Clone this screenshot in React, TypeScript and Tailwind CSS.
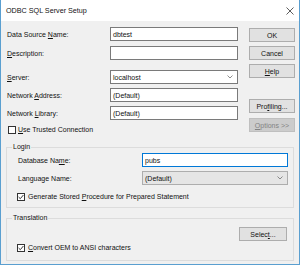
import React from 'react';

const U: React.FC<{ children: React.ReactNode }> = ({ children }) => <span className="underline underline-offset-[1px]">{children}</span>;

const Chevron: React.FC = () => (
  <svg width="6" height="4" viewBox="0 0 6 4" className="shrink-0">
    <path d="M0.5 0.5 L3 3 L5.5 0.5" fill="none" stroke="#707070" strokeWidth="0.8" />
  </svg>
);

const TextBox: React.FC<{ value?: string; focused?: boolean; className?: string }> = ({ value, focused, className }) => (
  <div
    className={`h-[14px] bg-white border flex items-center px-[2px] ${focused ? 'border-[#0078d7]' : 'border-[#7a7a7a]'} ${className ?? 'w-[128px]'}`}
  >
    {value}
  </div>
);

const Combo: React.FC<{ value: string; list?: boolean; className?: string }> = ({ value, list, className }) => (
  <div
    className={`h-[14px] border flex items-center justify-between pl-[2px] pr-[4px] ${
      list ? 'bg-[#e5e5e5] border-[#adadad]' : 'bg-white border-[#7a7a7a]'
    } ${className ?? 'w-[128px]'}`}
  >
    <span>{value}</span>
    <Chevron />
  </div>
);

const Button: React.FC<{ children: React.ReactNode; disabled?: boolean; className?: string }> = ({ children, disabled, className }) => (
  <div
    className={`h-[14px] flex items-center justify-center border ${
      disabled ? 'bg-[#cccccc] border-[#bfbfbf] text-[#838383]' : 'bg-[#e1e1e1] border-[#adadad]'
    } ${className ?? 'w-[46px]'}`}
  >
    {children}
  </div>
);

const Check: React.FC<{ checked?: boolean }> = ({ checked }) => (
  <div className="w-[8px] h-[8px] bg-white border border-[#333333] shrink-0 flex items-center justify-center">
    {checked && (
      <svg width="6" height="6" viewBox="0 0 6 6">
        <path d="M0.6 3 L2.3 4.7 L5.4 1" fill="none" stroke="#222" strokeWidth="0.9" />
      </svg>
    )}
  </div>
);

const FieldRow: React.FC<{ label: React.ReactNode; children: React.ReactNode; className?: string }> = ({ label, children, className }) => (
  <div className={`flex items-center ${className ?? ''}`}>
    <div className="w-[103px]">{label}</div>
    {children}
  </div>
);

const Group: React.FC<{ title: string; className?: string; children: React.ReactNode }> = ({ title, className, children }) => (
  <div className={`relative border border-[#dcdcdc] mx-[5px] ${className ?? ''}`}>
    <span className="absolute left-[5px] top-[-6px] bg-[#f0f0f0] px-[1px] leading-[10px]">{title}</span>
    {children}
  </div>
);

export default function App() {
  return (
    <div className="w-[300px] h-[265px] bg-[#f0f0f0] border-x border-b border-[#5a9fd0] flex flex-col overflow-hidden text-[7px] leading-[9px] text-[#111] font-['Liberation_Sans',Arial,sans-serif]">
      <div className="h-[21px] shrink-0 bg-white flex items-center justify-between pl-[5px] pr-[5px] text-[7.2px]">
        <span>ODBC SQL Server Setup</span>
        <svg width="8" height="8" viewBox="0 0 8 8">
          <path d="M0.5 0.5 L7.5 7.5 M7.5 0.5 L0.5 7.5" stroke="#333" strokeWidth="0.8" />
        </svg>
      </div>

      <div className="flex justify-between pl-[6px] pr-[4px]">
        <div className="flex flex-col pt-[6px]">
          <FieldRow label={<>Data Source <U>N</U>ame:</>}>
            <TextBox value="dbtest" />
          </FieldRow>
          <FieldRow className="mt-[5px]" label={<><U>D</U>escription:</>}>
            <TextBox />
          </FieldRow>
          <FieldRow className="mt-[10px]" label={<><U>S</U>erver:</>}>
            <Combo value="localhost" />
          </FieldRow>
          <FieldRow className="mt-[4px]" label={<>Network <U>A</U>ddress:</>}>
            <TextBox value="(Default)" />
          </FieldRow>
          <FieldRow className="mt-[4px]" label={<>Network <U>L</U>ibrary:</>}>
            <TextBox value="(Default)" />
          </FieldRow>
          <div className="flex items-center gap-[2px] mt-[5px] ml-[1px]">
            <Check />
            <span><U>U</U>se Trusted Connection</span>
          </div>
        </div>

        <div className="flex flex-col pt-[7px]">
          <Button>OK</Button>
          <Button className="w-[46px] mt-[4px]">Cancel</Button>
          <Button className="w-[46px] mt-[4px]"><U>H</U>elp</Button>
          <Button className="w-[46px] mt-[21px]">Pro<U>f</U>iling...</Button>
          <Button disabled className="w-[46px] mt-[5px]"><U>O</U>ptions &gt;&gt;</Button>
        </div>
      </div>

      <Group title="Login" className="mt-[13px] pt-[5px] pb-[6px] pl-[10px] pr-[5px]">
        <div className="flex items-center justify-between pl-[1px]">
          <span>Database Na<U>m</U>e:</span>
          <TextBox value="pubs" focused className="w-[146px]" />
        </div>
        <div className="flex items-center justify-between pl-[1px] mt-[4px]">
          <span>Language Name:</span>
          <Combo value="(Default)" list className="w-[146px]" />
        </div>
        <div className="flex items-center gap-[3px] mt-[7px]">
          <Check checked />
          <span>Generate Stored <U>P</U>rocedure for Prepared Statement</span>
        </div>
      </Group>

      <Group title="Translation" className="mt-[10px] pt-[8px] pb-[8px] pl-[10px] pr-[6px]">
        <div className="flex justify-end">
          <Button className="w-[48px]">Selec<U>t</U>...</Button>
        </div>
        <div className="flex items-center gap-[3px] mt-[2px]">
          <Check checked />
          <span><U>C</U>onvert OEM to ANSI characters</span>
        </div>
      </Group>
    </div>
  );
}
